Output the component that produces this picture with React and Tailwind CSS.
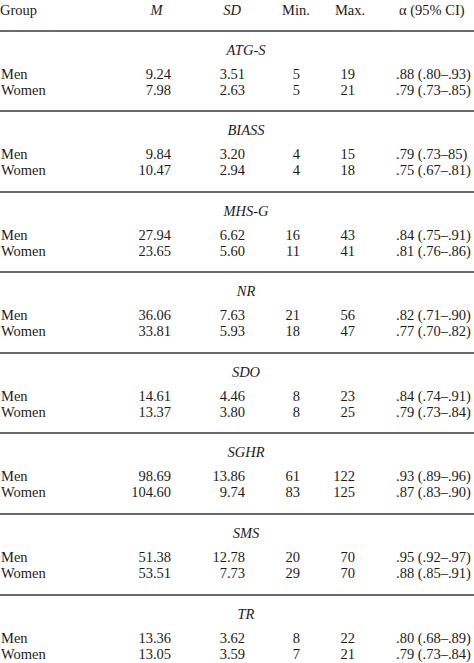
import React from "react";

const sections = [
  {
    title: "ATG-S",
    rows: [
      ["Men", "9.24", "3.51", "5", "19", ".88 (.80–.93)"],
      ["Women", "7.98", "2.63", "5", "21", ".79 (.73–.85)"],
    ],
  },
  {
    title: "BIASS",
    rows: [
      ["Men", "9.84", "3.20", "4", "15", ".79 (.73–85)"],
      ["Women", "10.47", "2.94", "4", "18", ".75 (.67–.81)"],
    ],
  },
  {
    title: "MHS-G",
    rows: [
      ["Men", "27.94", "6.62", "16", "43", ".84 (.75–.91)"],
      ["Women", "23.65", "5.60", "11", "41", ".81 (.76–.86)"],
    ],
  },
  {
    title: "NR",
    rows: [
      ["Men", "36.06", "7.63", "21", "56", ".82 (.71–.90)"],
      ["Women", "33.81", "5.93", "18", "47", ".77 (.70–.82)"],
    ],
  },
  {
    title: "SDO",
    rows: [
      ["Men", "14.61", "4.46", "8", "23", ".84 (.74–.91)"],
      ["Women", "13.37", "3.80", "8", "25", ".79 (.73–.84)"],
    ],
  },
  {
    title: "SGHR",
    rows: [
      ["Men", "98.69", "13.86", "61", "122", ".93 (.89–.96)"],
      ["Women", "104.60", "9.74", "83", "125", ".87 (.83–.90)"],
    ],
  },
  {
    title: "SMS",
    rows: [
      ["Men", "51.38", "12.78", "20", "70", ".95 (.92–.97)"],
      ["Women", "53.51", "7.73", "29", "70", ".88 (.85–.91)"],
    ],
  },
  {
    title: "TR",
    rows: [
      ["Men", "13.36", "3.62", "8", "22", ".80 (.68–.89)"],
      ["Women", "13.05", "3.59", "7", "21", ".79 (.73–.84)"],
    ],
  },
];

const Row = ({ cells }) => (
  <div className="grid grid-cols-[100px_71px_74px_55px_55px_1fr] h-[16px] leading-[16px] whitespace-nowrap">
    <div className="pl-px">{cells[0]}</div>
    <div className="text-right">{cells[1]}</div>
    <div className="text-right">{cells[2]}</div>
    <div className="text-right">{cells[3]}</div>
    <div className="text-right">{cells[4]}</div>
    <div className="pl-[41px]">{cells[5]}</div>
  </div>
);

export default function App() {
  return (
    <div className="w-[474px] h-[663px] overflow-hidden bg-white text-[#1c1c1c] text-[14.5px] font-['Liberation_Serif','Times_New_Roman',serif]">
      <div className="pt-[2px] pb-[11.5px] grid grid-cols-[130px_53px_98px_30px_78px_1fr] h-[29.5px] leading-[16px] whitespace-nowrap">
        <div>Group</div>
        <div className="text-center italic">M</div>
        <div className="text-center italic">SD</div>
        <div className="text-center">Min.</div>
        <div className="text-center">Max.</div>
        <div className="pl-[10px]">α (95% CI)</div>
      </div>

      {sections.map((s) => (
        <div key={s.title} className="border-t-2 border-[#6a6a6a] pt-[10px] pb-[12.6px]">
          <div className="pl-[18px] text-center italic leading-[16px] h-[16px] mb-[8px]">
            {s.title}
          </div>
          {s.rows.map((r) => (
            <Row key={r[0]} cells={r} />
          ))}
        </div>
      ))}
    </div>
  );
}
